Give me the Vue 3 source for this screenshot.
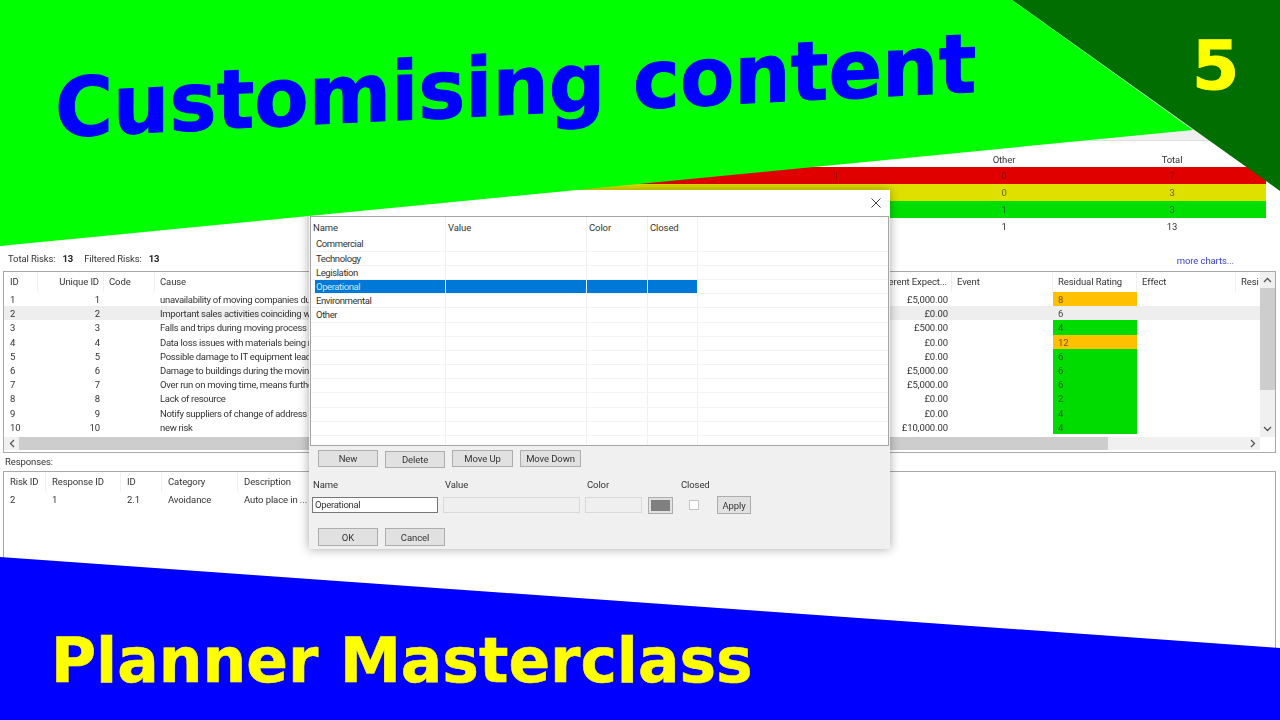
<script setup>
const risks = [
	{ id: 1, cause: 'unavailability of moving companies du', cost: '£5,000.00', rating: 8, level: 'amber' },
	{ id: 2, cause: 'Important sales activities coinciding wi', cost: '£0.00', rating: 6, level: '' },
	{ id: 3, cause: 'Falls and trips during moving process', cost: '£500.00', rating: 4, level: 'green' },
	{ id: 4, cause: 'Data loss issues with materials being m', cost: '£0.00', rating: 12, level: 'amber' },
	{ id: 5, cause: 'Possible damage to IT equipment lead', cost: '£0.00', rating: 6, level: 'green' },
	{ id: 6, cause: 'Damage to buildings during the moving', cost: '£5,000.00', rating: 6, level: 'green' },
	{ id: 7, cause: 'Over run on moving time, means furthe', cost: '£5,000.00', rating: 6, level: 'green' },
	{ id: 8, cause: 'Lack of resource', cost: '£0.00', rating: 2, level: 'green' },
	{ id: 9, cause: 'Notify suppliers of change of address', cost: '£0.00', rating: 4, level: 'green' },
	{ id: 10, cause: 'new risk', cost: '£10,000.00', rating: 4, level: 'green' },
]

const summary = [
	{ level: 'red', first: '1', other: '0', total: '7' },
	{ level: 'yellow', first: '', other: '0', total: '3' },
	{ level: 'lime', first: '', other: '1', total: '3' },
	{ level: '', first: '', other: '1', total: '13' },
]

const categories = ['Commercial', 'Technology', 'Legislation', 'Operational', 'Environmental', 'Other', '', '', '', '', '', '', '', '', '']
</script>

<template>
	<div class="page">
		<div class="app">
			<div class="topbar"></div>
			<div class="summary">
				<div class="sum-row sum-head">
					<span></span>
					<span>Other</span>
					<span>Total</span>
				</div>
				<div v-for="(s, i) in summary" :key="i" class="sum-row" :class="s.level">
					<span>{{ s.first }}</span>
					<span>{{ s.other }}</span>
					<span>{{ s.total }}</span>
				</div>
			</div>

			<div class="stats">
				<div class="totals">
					<span>Total Risks:</span><b>13</b>
					<span>Filtered Risks:</span><b>13</b>
				</div>
				<a class="more">more charts...</a>
			</div>

			<div class="risk-table">
				<div class="risk-body">
					<div class="risk-main">
						<div class="risk-row risk-head">
							<span>ID</span>
							<span class="num">Unique ID</span>
							<span>Code</span>
							<span>Cause</span>
							<span class="num">Inherent Expect...</span>
							<span>Event</span>
							<span>Residual Rating</span>
							<span>Effect</span>
							<span>Resi</span>
						</div>
						<div v-for="r in risks" :key="r.id" class="risk-row" :class="{ alt: r.id === 2 }">
							<span>{{ r.id }}</span>
							<span class="num">{{ r.id }}</span>
							<span></span>
							<span class="cause">{{ r.cause }}</span>
							<span class="num">{{ r.cost }}</span>
							<span></span>
							<span class="rating" :class="r.level">{{ r.rating }}</span>
							<span></span>
							<span></span>
						</div>
					</div>
					<div class="vscroll">
						<svg class="arrow" width="9" height="6" viewBox="0 0 9 6"><path d="M1 5l3.500-3.500L8 5" /></svg>
						<div class="vtrack"><div class="vthumb"></div></div>
						<svg class="arrow" width="9" height="6" viewBox="0 0 9 6"><path d="M1 1l3.500 3.500L8 1" /></svg>
					</div>
				</div>
				<div class="hscroll">
					<svg class="arrow" width="6" height="9" viewBox="0 0 6 9"><path d="M5 1L1.500 4.500 5 8" /></svg>
					<div class="hthumb"></div>
					<svg class="arrow" width="6" height="9" viewBox="0 0 6 9"><path d="M1 1l3.500 3.500L1 8" /></svg>
				</div>
			</div>

			<div class="resp-label">Responses:</div>
			<div class="resp-table">
				<div class="resp-row resp-head">
					<span>Risk ID</span>
					<span>Response ID</span>
					<span>ID</span>
					<span>Category</span>
					<span>Description</span>
				</div>
				<div class="resp-row">
					<span>2</span>
					<span>1</span>
					<span>2.1</span>
					<span>Avoidance</span>
					<span>Auto place in ...</span>
				</div>
			</div>
		</div>

		<div class="dialog">
			<div class="dlg-title">
				<svg width="10" height="10" viewBox="0 0 10 10"><path d="M.5 .5l9 9M9.500 .5l-9 9" /></svg>
			</div>
			<div class="list">
				<div class="list-row list-head">
					<span>Name</span>
					<span>Value</span>
					<span>Color</span>
					<span>Closed</span>
					<span></span>
				</div>
				<div v-for="(c, i) in categories" :key="i" class="list-row" :class="{ selected: c === 'Operational' }">
					<span>{{ c }}</span>
					<span></span>
					<span></span>
					<span></span>
					<span></span>
				</div>
			</div>
			<div class="btn-row">
				<button class="btn">New</button>
				<button class="btn low">Delete</button>
				<button class="btn wide">Move Up</button>
				<button class="btn wide">Move Down</button>
			</div>
			<div class="edit-labels">
				<span>Name</span>
				<span>Value</span>
				<span>Color</span>
				<span>Closed</span>
			</div>
			<div class="edit-row">
				<div class="field active">Operational</div>
				<div class="field value"></div>
				<div class="field color"></div>
				<div class="swatch"><i></i></div>
				<div class="check"></div>
				<button class="btn apply">Apply</button>
			</div>
			<div class="btn-row bottom">
				<button class="btn">OK</button>
				<button class="btn">Cancel</button>
			</div>
		</div>

		<div class="banner-dark"></div>
		<div class="banner-green"></div>
		<div class="banner-blue">
			<div class="subtitle">Planner Masterclass</div>
		</div>
		<h1 class="title">Customising content</h1>
		<div class="episode">5</div>
	</div>
</template>

<style scoped>
.page {
	position: relative;
	width: 1280px;
	height: 720px;
	overflow: hidden;
	background: #fff;
	font-family: Roboto, 'Liberation Sans', sans-serif;
	font-size: 9.500px;
	letter-spacing: -0.100px;
	color: #333;
}

.app {
	display: flex;
	flex-direction: column;
	height: 720px;
	filter: blur(0.35px);
}
.topbar {
	height: 140px;
	background: #efefef;
	border-bottom: 1px solid #ddd;
	flex: none;
}

.summary {
	padding: 10px 14px 0 400px;
	height: 107px;
	flex: none;
	box-sizing: border-box;
}
.sum-row {
	display: grid;
	grid-template-columns: repeat(3, 168px);
	padding: 0 10px 0 352px;
	height: 17px;
	line-height: 17px;
	text-align: center;
	box-sizing: border-box;
}
.sum-head {
	height: 16px;
}
.red { background: #e00000; color: #8a0000; }
.yellow { background: #e0e000; color: #666600; }
.lime { background: #00e000; color: #006a00; }

.stats {
	display: flex;
	justify-content: space-between;
	height: 23px;
	padding: 4px 46px 0 8px;
	box-sizing: border-box;
	flex: none;
}
.totals {
	display: flex;
	gap: 7px;
	line-height: 14px;
}
.totals b {
	color: #222;
	margin-right: 4px;
}
.more {
	color: #3a44d8;
	line-height: 18px;
}

.risk-table {
	margin: 0 4px 0 3px;
	height: 182px;
	border: 1px solid #a9a9a9;
	flex: none;
	box-sizing: border-box;
	display: flex;
	flex-direction: column;
}
.risk-body {
	display: flex;
	height: 165px;
}
.risk-main {
	flex: 1;
	min-width: 0;
}
.risk-row {
	display: grid;
	grid-template-columns: 30px 66px 51px 705px 92px 101px 84px 99px 25px;
	padding-left: 4px;
	height: 14.200px;
	line-height: 15.500px;
}
.risk-row span {
	overflow: hidden;
	white-space: nowrap;
	padding: 0 4px 0 5px;
}
.risk-row span:first-child {
	padding-left: 2px;
}
.risk-row .cause {
	letter-spacing: -0.300px;
}
.risk-head {
	height: 20px;
	line-height: 20px;
}
.risk-head span {
	border-right: 1px solid #f0f0f0;
}
.alt {
	background: #eee;
}
.num {
	text-align: right;
}
.rating {
	color: #444;
}
.rating.amber {
	background: #ffc000;
	color: #7a5000;
}
.rating.green {
	background: #00dc00;
	color: #006400;
}

.vscroll {
	width: 15px;
	background: #f0f0f0;
	display: flex;
	flex-direction: column;
	align-items: center;
	padding: 5px 0;
	box-sizing: border-box;
	height: 165px;
}
.vtrack {
	flex: 1;
	width: 100%;
	padding-top: 5px;
}
.vthumb {
	height: 102px;
	background: #cdcdcd;
}
.hscroll {
	height: 13px;
	background: #f0f0f0;
	display: flex;
	align-items: center;
	padding: 0 4px 0 5px;
	margin-right: 15px;
}
.hthumb {
	flex: none;
	width: 1089px;
	height: 13px;
	background: #cdcdcd;
	margin-left: 4px;
	margin-right: auto;
}
.arrow {
	flex: none;
}
.arrow path {
	fill: none;
	stroke: #555;
	stroke-width: 1.300;
}

.resp-label {
	height: 18px;
	line-height: 18px;
	padding-left: 5px;
	flex: none;
}
.resp-table {
	margin: 0 4px 0 3px;
	border: 1px solid #a9a9a9;
	flex: 1;
}
.resp-row {
	display: grid;
	grid-template-columns: 42px 75px 41px 76px 72px;
	height: 15px;
	line-height: 15px;
}
.resp-row span {
	padding-left: 6px;
	white-space: nowrap;
	overflow: hidden;
}
.resp-head {
	height: 20px;
	line-height: 20px;
}
.resp-head span {
	border-right: 1px solid #f0f0f0;
}

.dialog {
	position: absolute;
	left: 309px;
	top: 190px;
	width: 581px;
	height: 359px;
	background: #f0f0f0;
	box-shadow: 0 0 10px rgba(0, 0, 0, 0.35);
	filter: blur(0.35px);
}
.dlg-title {
	height: 26px;
	background: #fff;
	display: flex;
	justify-content: flex-end;
	align-items: center;
	padding-right: 9px;
	box-sizing: border-box;
}
.dlg-title path {
	stroke: #444;
	stroke-width: 1;
	fill: none;
}
.list {
	margin: 0 1px;
	height: 230px;
	background: #fff;
	border: 1px solid #a5a5a5;
	box-sizing: border-box;
	overflow: hidden;
}
.list-row {
	display: grid;
	grid-template-columns: 135px 141px 61px 50px 1fr;
	height: 14.200px;
	line-height: 14px;
	box-sizing: border-box;
	border-bottom: 1px solid #f3f3f3;
	letter-spacing: -0.400px;
}
.list-row span {
	border-right: 1px solid #f0f0f0;
	padding-left: 5px;
	white-space: nowrap;
}
.list-row span:last-child {
	border-right: 0;
}
.list-head {
	height: 20.400px;
	line-height: 21px;
	border-bottom: 0;
	letter-spacing: -0.100px;
}
.list-head span {
	padding-left: 2px;
}
.selected {
	background: linear-gradient(to right, #fff 4px, #0078d7 4px, #0078d7 386px, #fff 386px);
	color: #cfe6fb;
}
.selected span {
	border-right-color: #e8f2fb;
}
.selected span:nth-child(n + 4) {
	border-right-color: transparent;
}

.btn-row {
	display: flex;
	gap: 7px;
	padding: 4px 0 0 9px;
	align-items: flex-start;
}
.btn {
	width: 60px;
	height: 17px;
	padding: 0;
	font: inherit;
	letter-spacing: inherit;
	color: #333;
	background: #e1e1e1;
	border: 1px solid #adadad;
	box-sizing: border-box;
}
.btn.low {
	margin-top: 1px;
}
.btn.wide {
	width: 61px;
}
.edit-labels {
	display: grid;
	grid-template-columns: 132px 142px 94px 60px;
	padding: 9px 0 0 4px;
	height: 30px;
	box-sizing: border-box;
	line-height: 16px;
}
.edit-row {
	display: flex;
	align-items: center;
	padding-left: 3px;
	height: 18px;
	margin-top: -2px;
}
.field {
	height: 16px;
	line-height: 14px;
	box-sizing: border-box;
	border: 1px solid #d9d9d9;
	background: #efefef;
	padding-left: 2px;
}
.field.active {
	width: 126px;
	background: #fff;
	border-color: #777;
	margin-right: 5px;
	letter-spacing: -0.300px;
}
.field.value {
	width: 137px;
	margin-right: 5px;
}
.field.color {
	width: 57px;
	margin-right: 6px;
}
.swatch {
	width: 25px;
	height: 17px;
	background: #e1e1e1;
	border: 1px solid #adadad;
	box-sizing: border-box;
	padding: 2px;
	margin-right: 16px;
}
.swatch i {
	display: block;
	height: 100%;
	background: #808080;
}
.check {
	width: 10px;
	height: 10px;
	background: #fff;
	border: 1px solid #c4c4c4;
	box-sizing: border-box;
	margin-right: 18px;
}
.btn.apply {
	width: 34px;
	height: 18px;
}
.bottom {
	padding-top: 14px;
}
.bottom .btn {
	height: 18px;
}

.banner-green {
	position: absolute;
	inset: 0;
	background: #00ff00;
	clip-path: polygon(0 0, 1012px 0, 1193px 130px, 0 246px);
}
.banner-dark {
	position: absolute;
	inset: 0;
	background: #006e00;
	clip-path: polygon(1012px 0, 1280px 0, 1280px 191px);
}
.banner-blue {
	position: absolute;
	inset: 0;
	background: #0000ff;
	clip-path: polygon(0 557px, 1280px 648px, 1280px 720px, 0 720px);
	display: flex;
	align-items: flex-end;
	font-family: 'DejaVu Sans', sans-serif;
	letter-spacing: 0;
}
.subtitle {
	color: #ffff00;
	font-size: 61.500px;
	font-weight: 700;
	line-height: 72px;
	margin: 0 0 23px 51px;
	-webkit-text-stroke: 0.600px #ffff00;
}
.title {
	position: absolute;
	left: 55px;
	top: 64px;
	margin: 0;
	color: #0000ff;
	font-family: 'DejaVu Sans', sans-serif;
	font-size: 82px;
	line-height: 90px;
	font-weight: 700;
	letter-spacing: 0;
	white-space: nowrap;
	-webkit-text-stroke: 1px #0000ff;
	transform: skewY(-2.800deg) scaleX(0.965);
	transform-origin: left bottom;
}
.episode {
	position: absolute;
	left: 1192px;
	top: 26px;
	color: #ffff00;
	font-family: 'DejaVu Sans', sans-serif;
	font-size: 68px;
	line-height: 80px;
	font-weight: 700;
	letter-spacing: 0;
	-webkit-text-stroke: 1px #ffff00;
}
</style>
